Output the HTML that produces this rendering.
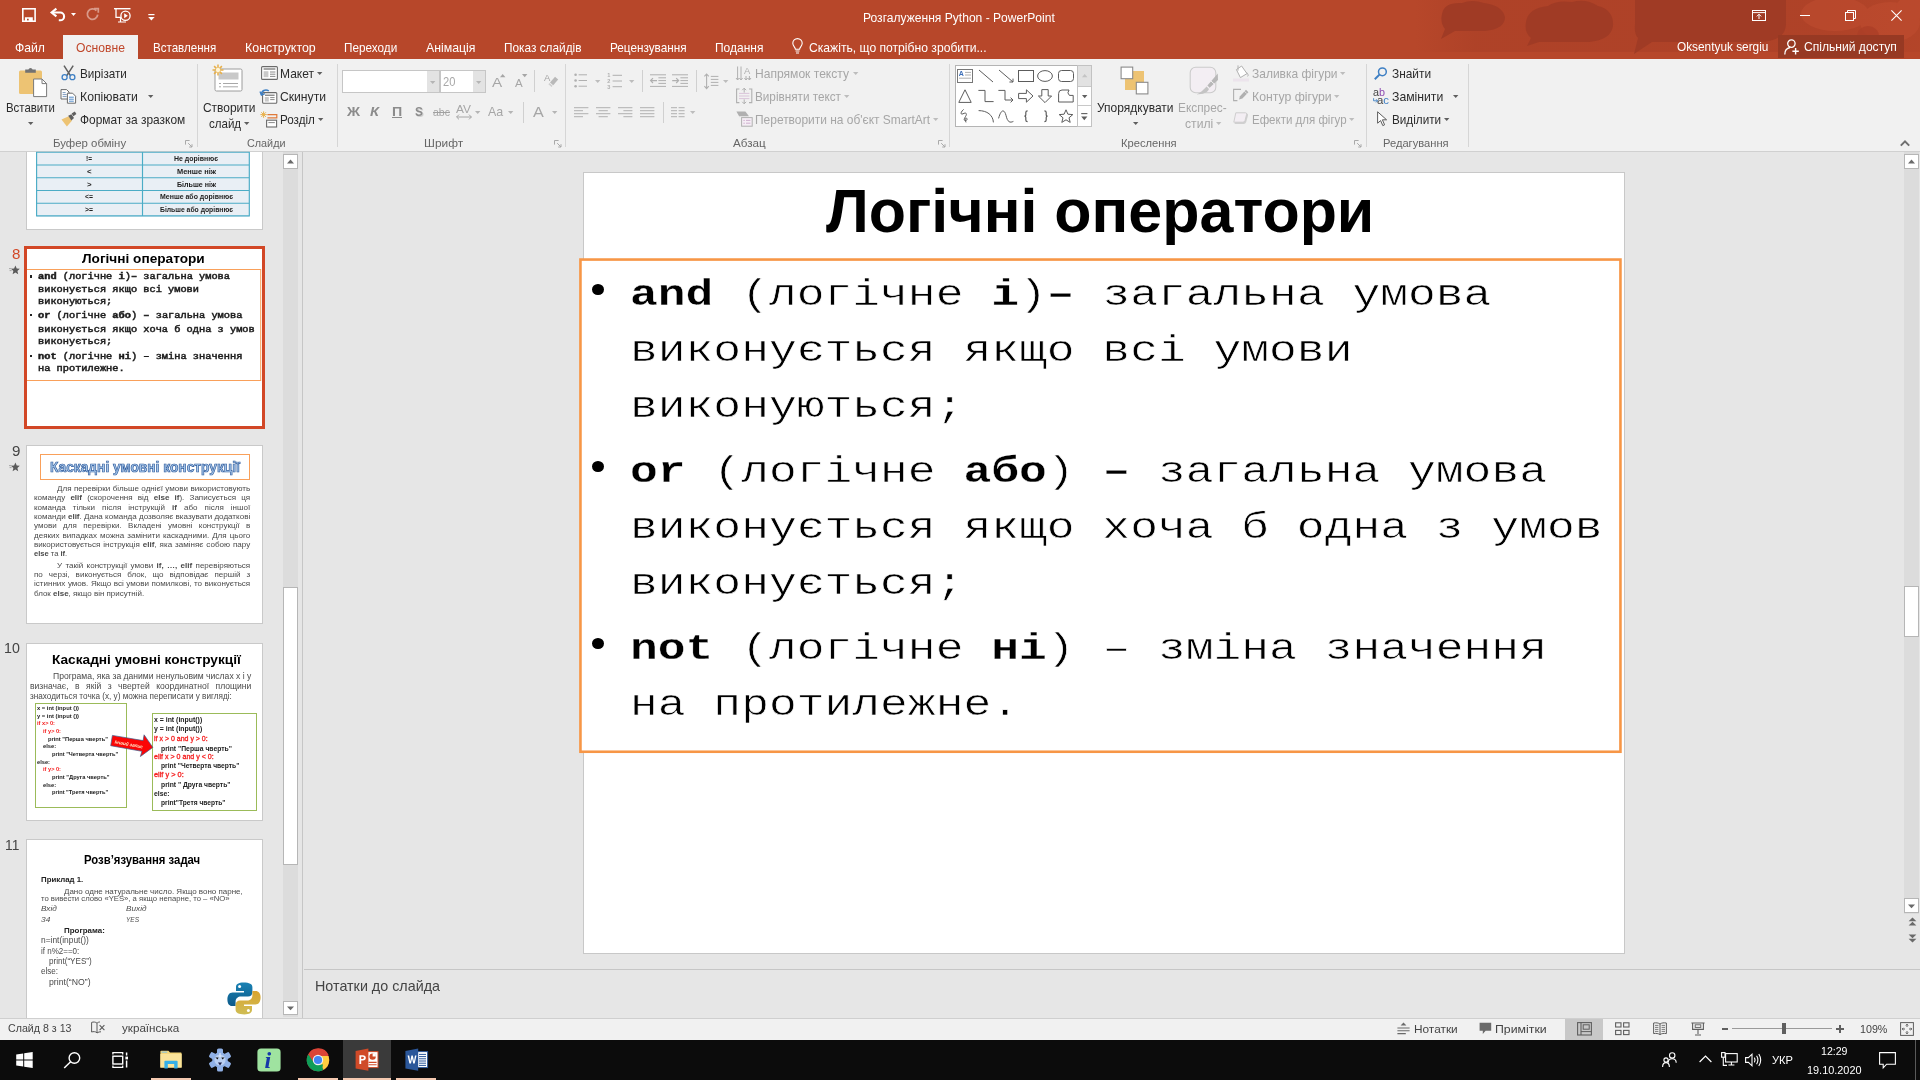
<!DOCTYPE html>
<html><head><meta charset="utf-8">
<style>
*{box-sizing:border-box;margin:0;padding:0}
html,body{width:1920px;height:1080px;overflow:hidden;background:#e6e6e6}
body{font-family:"Liberation Sans",sans-serif;font-size:12px;color:#262626;position:relative}
.a{position:absolute;white-space:pre}
svg{position:absolute;overflow:visible}
.stx b{-webkit-text-stroke:0.3px #fff}
.mono{font-family:"Liberation Mono",monospace}
#root{position:absolute;left:0;top:0;width:1920px;height:1080px;will-change:transform;}
</style></head><body><div id="root">

<div class="a" style="left:0;top:0;width:1920px;height:59px;background:#b7472a"></div>
<div class="a" style="left:0;top:59px;width:1920px;height:93px;background:#f1f1f1;border-bottom:1px solid #d0d0d0"></div>
<div class="a" style="left:0;top:152px;width:1920px;height:866px;background:#e6e6e6"></div>
<div class="a" style="left:0;top:1018px;width:1920px;height:22px;background:#f1f1f1;border-top:1px solid #cfcfcf"></div>
<div class="a" style="left:0;top:1040px;width:1920px;height:40px;background:#0c0c0c"></div>

<svg style="left:1400px;top:0" width="520" height="59" viewBox="1400 0 520 59">
<defs><clipPath id="tbc"><rect x="1400" y="0" width="520" height="59"/></clipPath>
<linearGradient id="tbh" x1="0" x2="1" y1="0" y2="0"><stop offset="0" stop-color="#a83e26" stop-opacity="0"/><stop offset=".12" stop-color="#a83e26" stop-opacity=".55"/><stop offset=".8" stop-color="#a83e26" stop-opacity=".55"/><stop offset="1" stop-color="#a83e26" stop-opacity=".25"/></linearGradient></defs>
<g clip-path="url(#tbc)">
<rect x="1415" y="0" width="505" height="52" fill="url(#tbh)"/>
<g fill="#a03b25">
<path d="M1442 14q2-12 20-11 10-4 22 0 18 2 21 14 0 12-20 14h-30l-14 8 4-10q-5-6-3-15z"/>
<path d="M1526 22q2-14 22-16 8-6 24-4 14-4 26 4 16 4 15 20-2 14-24 16h-50l-12 4 4-8q-7-6-5-16z"/>
<path d="M1635 0h151v24q0 18-30 18h-104l-18 12 4-16q-4-4-3-14z"/>
</g>
<g fill="#c24e31" opacity=".5"><ellipse cx="1835" cy="14" rx="34" ry="17"/><ellipse cx="1890" cy="22" rx="30" ry="20"/><ellipse cx="1912" cy="8" rx="16" ry="12"/></g><ellipse cx="1868" cy="36" rx="11" ry="10" fill="#ab3f27" opacity=".8"/>
</g></svg>
<svg style="left:22px;top:8px" width="14" height="14" viewBox="0 0 14 14"><rect x="0.800" y="0.800" width="12.300" height="12.400" fill="none" stroke="#fff" stroke-width="1.600"/><path d="M2.900 9.200H10.800V13H6.700V10.800H5V13H2.900z" fill="#fff"/></svg>
<svg style="left:50px;top:7px" width="17" height="16" viewBox="50 7 17 16"><path d="M52 12.500H60.200A3.900 3.900 0 0 1 60.200 20.300H58.800" fill="none" stroke="#fff" stroke-width="2.100"/><path d="M56.400 8.600L51.600 12.500 56.400 16.400" fill="none" stroke="#fff" stroke-width="2.100"/></svg>
<svg style="left:71.200px;top:12.800px" width="6" height="4"><path d="M0 0h5L2.500 3z" fill="#fff"/></svg>
<svg style="left:86px;top:7px" width="14" height="15" viewBox="86 7 14 15"><path d="M96.400 10.700A5.200 5.200 0 1 0 97.700 14.600" fill="none" stroke="#d99a8a" stroke-width="1.800"/><path d="M94 8.700H98.300V12.800" fill="none" stroke="#d99a8a" stroke-width="1.700"/></svg>
<svg style="left:114px;top:7px" width="18" height="17" viewBox="0 0 18 17"><path d="M0 1.7h16.5" stroke="#fff" stroke-width="1.4"/><path d="M2 2v8.3h5" fill="none" stroke="#fff" stroke-width="1.3"/><circle cx="11.5" cy="8.8" r="4.6" fill="none" stroke="#fff" stroke-width="1.3"/><path d="M10.2 6.3v5l3.6-2.5z" fill="#fff"/><path d="M6.5 10.5v4M4 15h8" stroke="#fff" stroke-width="1.2"/></svg>
<svg style="left:147.500px;top:14.400px" width="7" height="8"><path d="M0.3 0.6h6.2" stroke="#fff" stroke-width="1.2"/><path d="M0.2 3h6.4L3.4 6.6z" fill="#fff"/></svg>
<div class="a" style="left:862.80px;top:11.99px;font-size:12.3px;line-height:1;color:#ffffff;transform-origin:0 0;transform:scaleX(0.9819);">Розгалуження Python - PowerPoint</div>
<svg style="left:1752px;top:10px" width="14" height="11" viewBox="0 0 14 11"><rect x="0.5" y="0.5" width="13" height="10" fill="none" stroke="#fff"/><path d="M0.5 2.6h13" stroke="#fff"/><path d="M7 9V4.4M4.8 6.4L7 4.2l2.2 2.2" fill="none" stroke="#fff"/></svg>
<div class="a" style="left:1800px;top:15px;width:10px;height:1px;background:#fff"></div>
<svg style="left:1845px;top:10px" width="11" height="11" viewBox="0 0 11 11"><rect x="0.5" y="2.5" width="8" height="8" fill="none" stroke="#fff"/><path d="M2.5 2.5v-2h8v8h-2" fill="none" stroke="#fff"/></svg>
<svg style="left:1891px;top:10px" width="11" height="11" viewBox="0 0 11 11"><path d="M0.4 0.4l10.2 10.2M10.6 0.4L0.4 10.6" stroke="#fff" stroke-width="1.1"/></svg>
<div class="a" style="left:63px;top:35px;width:75px;height:25px;background:#f1f1f1"></div>
<div class="a" style="left:14.50px;top:41.67px;font-size:12.2px;line-height:1;color:#ffffff;transform-origin:0 0;transform:scaleX(1.0010);">Файл</div>
<div class="a" style="left:152.75px;top:41.67px;font-size:12.2px;line-height:1;color:#ffffff;transform-origin:0 0;transform:scaleX(0.9498);">Вставлення</div>
<div class="a" style="left:244.75px;top:41.67px;font-size:12.2px;line-height:1;color:#ffffff;transform-origin:0 0;transform:scaleX(1.0180);">Конструктор</div>
<div class="a" style="left:344.00px;top:41.67px;font-size:12.2px;line-height:1;color:#ffffff;transform-origin:0 0;transform:scaleX(0.9643);">Переходи</div>
<div class="a" style="left:425.50px;top:41.67px;font-size:12.2px;line-height:1;color:#ffffff;transform-origin:0 0;transform:scaleX(1.0099);">Анімація</div>
<div class="a" style="left:503.70px;top:41.67px;font-size:12.2px;line-height:1;color:#ffffff;transform-origin:0 0;transform:scaleX(0.9706);">Показ слайдів</div>
<div class="a" style="left:609.60px;top:41.67px;font-size:12.2px;line-height:1;color:#ffffff;transform-origin:0 0;transform:scaleX(0.9641);">Рецензування</div>
<div class="a" style="left:714.60px;top:41.67px;font-size:12.2px;line-height:1;color:#ffffff;transform-origin:0 0;transform:scaleX(0.9831);">Подання</div>
<div class="a" style="left:808.90px;top:41.67px;font-size:12.2px;line-height:1;color:#ffffff;transform-origin:0 0;transform:scaleX(0.9958);">Скажіть, що потрібно зробити...</div>
<div class="a" style="left:75.75px;top:41.67px;font-size:12.2px;line-height:1;color:#c0472b;transform-origin:0 0;transform:scaleX(0.9984);">Основне</div>
<svg style="left:792px;top:38px" width="11" height="16" viewBox="0 0 11 16"><path d="M3.4 11.2c0-2-2.6-3-2.6-5.9a4.7 4.7 0 0 1 9.4 0c0 2.9-2.6 3.9-2.6 5.9z" fill="none" stroke="#fff" stroke-width="1.1"/><path d="M3.5 13h4M4 15h3" stroke="#fff" stroke-width="1.1"/></svg>
<div class="a" style="left:1676.80px;top:40.67px;font-size:12.2px;line-height:1;color:#ffffff;transform-origin:0 0;transform:scaleX(0.9707);">Oksentyuk sergiu</div>
<div class="a" style="left:1778px;top:35px;width:126px;height:23px;background:#973923"></div>
<svg style="left:1784px;top:39px" width="16" height="16" viewBox="0 0 16 16"><circle cx="7.4" cy="4.6" r="3.7" fill="none" stroke="#fff" stroke-width="1.3"/><path d="M0.8 15.4c0-4 2.6-6.4 5.2-6.9" fill="none" stroke="#fff" stroke-width="1.3"/><path d="M11.6 9v6.4M8.4 12.2h6.4" stroke="#fff" stroke-width="1.4"/></svg>
<div class="a" style="left:1803.60px;top:40.67px;font-size:12.2px;line-height:1;color:#ffffff;transform-origin:0 0;transform:scaleX(0.9914);">Спільний доступ</div>
<svg style="left:18px;top:66px" width="31" height="32" viewBox="0 0 31 32">
<rect x="1" y="4.5" width="23" height="23.5" rx="1.5" fill="#edc373"/>
<path d="M7.2 6.8V3.6h3.2a2.2 2.2 0 0 1 4.2 0h3.2v3.2z" fill="#727272"/>
<path d="M15.6 13h8.4l4.6 4.6V30.6H15.6z" fill="#fff" stroke="#7a7a7a" stroke-width="1"/>
<path d="M24 13v4.6h4.6" fill="none" stroke="#7a7a7a" stroke-width="1"/></svg>
<div class="a" style="left:6.20px;top:101.90px;font-size:12.4px;line-height:1;color:#2b2b2b;transform-origin:0 0;transform:scaleX(0.9208);">Вставити</div>
<svg style="left:27.8px;top:121.5px" width="6" height="4"><path d="M0 0h5.4L2.7 3z" fill="#5f5f5f"/></svg>
<svg style="left:61px;top:65px" width="16" height="16" viewBox="0 0 16 16">
<path d="M3 0.6l6.6 10.2M12.2 0.6L5.6 10.8" stroke="#5f5f5f" stroke-width="1.5" fill="none"/>
<circle cx="3.6" cy="12.2" r="2.5" fill="none" stroke="#3d7fc4" stroke-width="1.3"/><circle cx="11.4" cy="12.2" r="2.5" fill="none" stroke="#3d7fc4" stroke-width="1.3"/></svg>
<div class="a" style="left:80.30px;top:68.20px;font-size:12.4px;line-height:1;color:#2b2b2b;transform-origin:0 0;transform:scaleX(0.9430);">Вирізати</div>
<svg style="left:60px;top:89px" width="17" height="15" viewBox="0 0 17 15">
<path d="M1 0.6h5.6l2.4 2.4v7H1z" fill="#fff" stroke="#6a6a6a" stroke-width="1"/>
<path d="M2.6 3.6h3M2.6 5.6h4M2.6 7.6h4" stroke="#6f8fb8" stroke-width=".9"/>
<path d="M7.4 4.2h5.2l3 3V14.2H7.4z" fill="#fff" stroke="#6a6a6a" stroke-width="1"/>
<path d="M9 8.2h4.8M9 10.2h4.8M9 12.2h4.8" stroke="#3d7fc4" stroke-width=".9"/></svg>
<div class="a" style="left:80.30px;top:91.20px;font-size:12.4px;line-height:1;color:#2b2b2b;transform-origin:0 0;transform:scaleX(0.9892);">Копіювати</div>
<svg style="left:148.0px;top:94.8px" width="6" height="4"><path d="M0 0h5.4L2.7 3z" fill="#5f5f5f"/></svg>
<svg style="left:61px;top:111px" width="17" height="16" viewBox="0 0 17 16">
<path d="M0.5 8.6l7.2-3.4 3.2 4.6-5 5.6z" fill="#edc373"/>
<path d="M7.2 4.8l3.2-1.6 2.6 3.8-2.6 2.4z" fill="#5f5f5f"/>
<path d="M10.6 2.6l3.2-2 1.6 2.4-3 2.2z" fill="#5f5f5f"/></svg>
<div class="a" style="left:80.30px;top:114.10px;font-size:12.4px;line-height:1;color:#2b2b2b;transform-origin:0 0;transform:scaleX(0.9611);">Формат за зразком</div>
<div class="a" style="left:53.20px;top:136.68px;font-size:11.6px;line-height:1;color:#666;transform-origin:0 0;transform:scaleX(0.9843);">Буфер обміну</div>
<svg style="left:185.0px;top:140px" width="8" height="8" viewBox="0 0 8 8"><path d="M0.5 4.6V0.5H4.6" fill="none" stroke="#a0a0a0" stroke-width=".9"/><path d="M3.2 3.2l3.600 3.600M7 4.200v2.800H4.200" fill="none" stroke="#a0a0a0" stroke-width=".9"/></svg>
<div class="a" style="left:196.5px;top:63.5px;width:1px;height:83.0px;background:#d6d6d6"></div>
<svg style="left:212px;top:64px" width="32" height="29" viewBox="0 0 32 29">
<rect x="3" y="5" width="27" height="22" rx="1.5" fill="#fff" stroke="#9c9c9c" stroke-width="1"/>
<rect x="6.5" y="8.5" width="20" height="7" fill="#c9c9c9"/>
<path d="M7 19.5h2M11 19.5h15M7 22.8h2M11 22.8h15" stroke="#a8a8a8" stroke-width="1"/>
<g stroke="#e8b04a" stroke-width="1.5"><path d="M6 0.5v11M0.5 6h11M2.1 2.1l7.8 7.8M9.9 2.1L2.1 9.9"/></g><circle cx="6" cy="6" r="2.2" fill="#fff5d8"/></svg>
<div class="a" style="left:202.80px;top:101.90px;font-size:12.4px;line-height:1;color:#2b2b2b;transform-origin:0 0;transform:scaleX(0.9637);">Створити</div>
<div class="a" style="left:209.20px;top:117.70px;font-size:12.4px;line-height:1;color:#2b2b2b;transform-origin:0 0;transform:scaleX(0.9313);">слайд</div>
<svg style="left:243.5px;top:121.8px" width="6" height="4"><path d="M0 0h5.4L2.7 3z" fill="#5f5f5f"/></svg>
<svg style="left:260.5px;top:66px" width="17" height="14" viewBox="0 0 17 14"><rect x="0.6" y="0.6" width="15.8" height="12.8" rx="1" fill="#fff" stroke="#6a6a6a" stroke-width="1.1"/><path d="M2.6 3h11.8" stroke="#6a6a6a" stroke-width="1.2"/><rect x="2.6" y="5.2" width="4.8" height="6" fill="#c9c9c9"/><path d="M9 6h5.4M9 8.2h5.4M9 10.4h5.4" stroke="#8a8a8a" stroke-width="1"/></svg>
<div class="a" style="left:279.80px;top:68.20px;font-size:12.4px;line-height:1;color:#2b2b2b;transform-origin:0 0;transform:scaleX(0.9693);">Макет</div>
<svg style="left:316.8px;top:71.8px" width="6" height="4"><path d="M0 0h5.4L2.7 3z" fill="#5f5f5f"/></svg>
<svg style="left:260px;top:88px" width="18" height="16" viewBox="0 0 18 16"><rect x="2.6" y="4.6" width="14.2" height="10.6" rx="1" fill="#fff" stroke="#6a6a6a" stroke-width="1.1"/><path d="M5 7.2h9.6" stroke="#6a6a6a" stroke-width="1.1"/><rect x="4.8" y="9" width="4" height="4.6" fill="#c9c9c9"/><path d="M10.2 9.6h4.4M10.2 11.6h4.4" stroke="#8a8a8a" stroke-width="1"/><path d="M1.4 6.8C1.4 2.6 5.4 0.8 8.8 2.8" fill="none" stroke="#3d7fc4" stroke-width="1.5"/><path d="M0 3.6l1.4 3.6 3.4-1.6" fill="none" stroke="#3d7fc4" stroke-width="1.3"/></svg>
<div class="a" style="left:279.80px;top:91.20px;font-size:12.4px;line-height:1;color:#2b2b2b;transform-origin:0 0;transform:scaleX(0.9800);">Скинути</div>
<svg style="left:260px;top:111px" width="18" height="17" viewBox="0 0 18 17"><g stroke="#e8b04a" stroke-width="1"><path d="M3.6 0.4v6.4M0.4 3.6h6.4M1.3 1.3l4.6 4.6M5.9 1.3L1.3 5.9"/></g><path d="M7.4 3.6h9.4v3.2H7.4" fill="none" stroke="#e07a3a" stroke-width="1.2"/><rect x="6.6" y="9.2" width="10" height="6.8" fill="#fff" stroke="#6a6a6a" stroke-width="1.1"/><path d="M8.4 11.6h6.4" stroke="#8a8a8a" stroke-width="1"/></svg>
<div class="a" style="left:279.80px;top:114.10px;font-size:12.4px;line-height:1;color:#2b2b2b;transform-origin:0 0;transform:scaleX(0.9409);">Розділ</div>
<svg style="left:318.0px;top:117.8px" width="6" height="4"><path d="M0 0h5.4L2.7 3z" fill="#5f5f5f"/></svg>
<div class="a" style="left:247.30px;top:136.68px;font-size:11.6px;line-height:1;color:#666;transform-origin:0 0;transform:scaleX(0.9319);">Слайди</div>
<div class="a" style="left:337.0px;top:63.5px;width:1px;height:83.0px;background:#d6d6d6"></div>
<div class="a" style="left:342px;top:70px;width:97.5px;height:23px;background:#fff;border:1px solid #c6c6c6"></div>
<div class="a" style="left:426.5px;top:71px;width:12px;height:21px;background:#e3e3e3"></div>
<svg style="left:430.0px;top:80.6px" width="6" height="4"><path d="M0 0h5.4L2.7 3z" fill="#b5b5b5"/></svg>
<div class="a" style="left:440px;top:70px;width:46px;height:23px;background:#fff;border:1px solid #c6c6c6"></div>
<div class="a" style="left:472.5px;top:71px;width:12.5px;height:21px;background:#e3e3e3"></div>
<svg style="left:476.0px;top:80.6px" width="6" height="4"><path d="M0 0h5.4L2.7 3z" fill="#b5b5b5"/></svg>
<div class="a" style="left:442.80px;top:75.90px;font-size:12.4px;line-height:1;color:#a8a8a8;transform-origin:0 0;transform:scaleX(0.8988);">20</div>
<div class="a" style="left:492.00px;top:76.23px;font-size:13.2px;line-height:1;color:#a6a6a6;transform-origin:0 0;transform:scaleX(1.1595);">A</div>
<svg style="left:500px;top:73.6px" width="6" height="4"><path d="M0 3.2h5.4L2.7 0z" fill="#a6a6a6"/></svg>
<div class="a" style="left:515.30px;top:78.43px;font-size:10.6px;line-height:1;color:#a6a6a6;transform-origin:0 0;transform:scaleX(1.0879);">A</div>
<svg style="left:521.5px;top:73.6px" width="6" height="4"><path d="M0 0h5.4L2.7 3.2z" fill="#a6a6a6"/></svg>
<div class="a" style="left:534.2px;top:70px;width:1px;height:22px;background:#d0d0d0"></div>
<svg style="left:544px;top:73px" width="15" height="16" viewBox="0 0 15 16"><text x="0" y="8" font-family="Liberation Sans" font-size="9.5" fill="#a6a6a6">A</text><path d="M6 9.4l5-5.6 3.2 2.8-5 5.6z" fill="#b9b9b9"/><path d="M4.4 11.2l1-1.2 3.2 2.8-1 1.2z" fill="#cfcfcf"/></svg>
<div class="a" style="left:346.70px;top:105.90px;font-size:12.4px;line-height:1;color:#8c8c8c;transform-origin:0 0;transform:scaleX(1.1604);font-weight:bold;">Ж</div>
<div class="a" style="left:369.80px;top:105.90px;font-size:12.4px;line-height:1;color:#8c8c8c;transform-origin:0 0;transform:scaleX(1.1803);font-weight:bold;font-style:italic;">К</div>
<div class="a" style="left:392.00px;top:105.84px;font-size:12px;line-height:1;color:#8c8c8c;transform-origin:0 0;transform:scaleX(1.1826);font-weight:bold;">П</div>
<div class="a" style="left:392px;top:117px;width:10px;height:1px;background:#8c8c8c"></div>
<div class="a" style="left:415.70px;top:106.70px;font-size:12.4px;line-height:1;color:#cfcfcf;transform-origin:0 0;transform:scaleX(0.9679);font-weight:bold;">S</div>
<div class="a" style="left:414.80px;top:105.90px;font-size:12.4px;line-height:1;color:#8c8c8c;transform-origin:0 0;transform:scaleX(0.9558);font-weight:bold;">S</div>
<div class="a" style="left:432.80px;top:107.43px;font-size:10.6px;line-height:1;color:#a6a6a6;transform-origin:0 0;transform:scaleX(0.9887);">abc</div>
<div class="a" style="left:432.5px;top:112px;width:17.5px;height:1px;background:#a0a0a0"></div>
<div class="a" style="left:455.80px;top:104.60px;font-size:10.4px;line-height:1;color:#a6a6a6;transform-origin:0 0;transform:scaleX(1.1456);">AV</div>
<svg style="left:455.5px;top:113.5px" width="16" height="6" viewBox="0 0 16 6"><path d="M0.6 3h14.8M3 0.6L0.6 3 3 5.4M13 0.6L15.4 3 13 5.4" fill="none" stroke="#a6a6a6" stroke-width="1"/></svg>
<svg style="left:475.0px;top:111.1px" width="6" height="4"><path d="M0 0h5.4L2.7 3z" fill="#b5b5b5"/></svg>
<div class="a" style="left:487.80px;top:105.90px;font-size:12.4px;line-height:1;color:#a6a6a6;transform-origin:0 0;transform:scaleX(1.0029);">Aa</div>
<svg style="left:508.0px;top:111.1px" width="6" height="4"><path d="M0 0h5.4L2.7 3z" fill="#b5b5b5"/></svg>
<div class="a" style="left:522.5px;top:101.5px;width:1px;height:21.0px;background:#d0d0d0"></div>
<div class="a" style="left:532.50px;top:105.04px;font-size:14.6px;line-height:1;color:#a6a6a6;transform-origin:0 0;transform:scaleX(1.1095);">A</div>
<svg style="left:552.0px;top:111.1px" width="6" height="4"><path d="M0 0h5.4L2.7 3z" fill="#b5b5b5"/></svg>
<div class="a" style="left:424.20px;top:136.68px;font-size:11.6px;line-height:1;color:#666;transform-origin:0 0;transform:scaleX(1.0247);">Шрифт</div>
<svg style="left:554.0px;top:140px" width="8" height="8" viewBox="0 0 8 8"><path d="M0.5 4.6V0.5H4.6" fill="none" stroke="#a0a0a0" stroke-width=".9"/><path d="M3.2 3.2l3.600 3.600M7 4.200v2.800H4.200" fill="none" stroke="#a0a0a0" stroke-width=".9"/></svg>
<div class="a" style="left:565.3px;top:63.5px;width:1px;height:83.0px;background:#d6d6d6"></div>
<svg style="left:574px;top:73px" width="14" height="15" viewBox="0 0 14 15"><g fill="#b0b0b0"><circle cx="1.6" cy="1.8" r="1.3"/><circle cx="1.6" cy="7.5" r="1.3"/><circle cx="1.6" cy="13.2" r="1.3"/></g><path d="M4.6 1.8H13M4.6 7.5H13M4.6 13.2H13" stroke="#b0b0b0" stroke-width="1"/></svg>
<svg style="left:594.7px;top:79.8px" width="6" height="4"><path d="M0 0h5.4L2.7 3z" fill="#bdbdbd"/></svg>
<svg style="left:607px;top:72.5px" width="16" height="16" viewBox="0 0 16 16"><g font-family="Liberation Sans" font-size="5.6" font-weight="bold" fill="#b0b0b0"><text x="0.2" y="4.4">1</text><text x="0.2" y="10">2</text><text x="0.2" y="15.6">3</text></g><path d="M5.6 2.3H15M5.6 8H15M5.6 13.7H15" stroke="#b0b0b0" stroke-width="1"/></svg>
<svg style="left:629.0px;top:79.8px" width="6" height="4"><path d="M0 0h5.4L2.7 3z" fill="#bdbdbd"/></svg>
<div class="a" style="left:642.3px;top:70px;width:1px;height:22px;background:#d0d0d0"></div>
<svg style="left:650px;top:73.5px" width="16" height="14" viewBox="0 0 16 14"><path d="M0 0.8H16M8.4 3.8H16M8.4 6.6H16M8.4 9.4H16M0 12.4H16" stroke="#b0b0b0" stroke-width="1"/><path d="M0.6 6.6H7M3 4.2L0.6 6.6 3 9" fill="none" stroke="#b0b0b0" stroke-width="1.2"/></svg>
<svg style="left:672px;top:73.5px" width="16" height="14" viewBox="0 0 16 14"><path d="M0 0.8H16M8.4 3.8H16M8.4 6.6H16M8.4 9.4H16M0 12.4H16" stroke="#b0b0b0" stroke-width="1"/><path d="M0.2 6.6H6.6M4.2 4.2L6.6 6.6 4.2 9" fill="none" stroke="#b0b0b0" stroke-width="1.2"/></svg>
<div class="a" style="left:695.5px;top:70px;width:1px;height:22px;background:#d0d0d0"></div>
<svg style="left:703.5px;top:73px" width="15" height="17" viewBox="0 0 15 17"><path d="M2.6 1V15.6M0.4 3.4L2.6 1l2.2 2.4M0.4 13.2l2.2 2.4 2.2-2.4" fill="none" stroke="#b0b0b0" stroke-width="1.1"/><path d="M6.8 3.4H14.4M6.8 6.4H14.4M6.8 9.4H14.4M6.8 12.4H14.4" stroke="#b0b0b0" stroke-width="1"/></svg>
<svg style="left:723.0px;top:79.8px" width="6" height="4"><path d="M0 0h5.4L2.7 3z" fill="#bdbdbd"/></svg>
<svg style="left:735.5px;top:64.5px" width="16" height="17" viewBox="0 0 16 17"><path d="M1.6 1.5V15M5 1.5V15M0 13l1.6 2 1.6-2M3.4 13l1.6 2 1.6-2M10 11v4M13.4 11v4M8.4 13l1.6 2 1.6-2M11.8 13l1.6 2 1.6-2" fill="none" stroke="#b0b0b0" stroke-width="1"/><text x="8" y="8.6" font-family="Liberation Sans" font-size="9.4" fill="#b0b0b0">A</text></svg>
<div class="a" style="left:755.30px;top:68.20px;font-size:12.4px;line-height:1;color:#a6a6a6;transform-origin:0 0;transform:scaleX(0.9743);">Напрямок тексту</div>
<svg style="left:852.5px;top:71.8px" width="6" height="4"><path d="M0 0h5.4L2.7 3z" fill="#bdbdbd"/></svg>
<svg style="left:735.5px;top:88px" width="17" height="16" viewBox="0 0 17 16"><path d="M3.4 1H0.6v13.6h2.8M13 1h2.8v13.6H13" fill="none" stroke="#b0b0b0" stroke-width="1.1"/><path d="M3 5.4h10.4M3 8h10.4M3 10.6h10.4" stroke="#d7bfd7" stroke-width=".9"/><path d="M8.2 0.2v4.4M6.2 2.2l2-2 2 2M8.2 15.8v-4.4M6.2 13.8l2 2 2-2" fill="none" stroke="#b0b0b0" stroke-width="1"/></svg>
<div class="a" style="left:755.30px;top:91.20px;font-size:12.4px;line-height:1;color:#a6a6a6;transform-origin:0 0;transform:scaleX(0.9464);">Вирівняти текст</div>
<svg style="left:844.0px;top:94.8px" width="6" height="4"><path d="M0 0h5.4L2.7 3z" fill="#bdbdbd"/></svg>
<svg style="left:735.5px;top:111px" width="17" height="16" viewBox="0 0 17 16"><path d="M0.4 0.4h9l3.6 4.8H3l1.8 3z" fill="#b0b0b0"/><rect x="5.6" y="6.6" width="10.6" height="8.6" fill="#f6eef6" stroke="#b0b0b0" stroke-width="1"/><path d="M7.4 9.4h1.4M10 9.4h4.4M7.4 12.2h1.4M10 12.2h4.4" stroke="#c9a9c9" stroke-width=".9"/></svg>
<div class="a" style="left:755.30px;top:114.10px;font-size:12.4px;line-height:1;color:#a6a6a6;transform-origin:0 0;transform:scaleX(0.9645);">Перетворити на об&#x27;єкт SmartArt</div>
<svg style="left:933.0px;top:117.8px" width="6" height="4"><path d="M0 0h5.4L2.7 3z" fill="#bdbdbd"/></svg>
<svg style="left:573.7px;top:107px" width="15" height="11"><path d="M0.0 0.7H14.4M0.0 3.7H9.0M0.0 6.7H14.4M0.0 9.7H9.0" stroke="#b0b0b0" stroke-width="1"/></svg>
<svg style="left:595.8px;top:107px" width="15" height="11"><path d="M0.0 0.7H14.4M2.6 3.7H11.8M0.0 6.7H14.4M2.6 9.7H11.8" stroke="#b0b0b0" stroke-width="1"/></svg>
<svg style="left:617.5px;top:107px" width="15" height="11"><path d="M0.0 0.7H14.4M5.4 3.7H14.4M0.0 6.7H14.4M5.4 9.7H14.4" stroke="#b0b0b0" stroke-width="1"/></svg>
<svg style="left:640px;top:107px" width="15" height="11"><path d="M0.0 0.7H14.4M0.0 3.7H14.4M0.0 6.7H14.4M0.0 9.7H14.4" stroke="#b0b0b0" stroke-width="1"/></svg>
<div class="a" style="left:662.5px;top:101.5px;width:1px;height:21.0px;background:#d0d0d0"></div>
<svg style="left:670.8px;top:107px" width="14" height="11"><path d="M0 0.7H6M0 3.7H6M0 6.7H6M0 9.7H6M7.6 0.7H13.6M7.6 3.7H13.6M7.6 6.7H13.6M7.6 9.7H13.6" stroke="#b0b0b0" stroke-width="1"/></svg>
<svg style="left:690.0px;top:111.2px" width="6" height="4"><path d="M0 0h5.4L2.7 3z" fill="#bdbdbd"/></svg>
<div class="a" style="left:732.80px;top:136.68px;font-size:11.6px;line-height:1;color:#666;transform-origin:0 0;transform:scaleX(1.0052);">Абзац</div>
<svg style="left:938.0px;top:140px" width="8" height="8" viewBox="0 0 8 8"><path d="M0.5 4.6V0.5H4.6" fill="none" stroke="#a0a0a0" stroke-width=".9"/><path d="M3.2 3.2l3.600 3.600M7 4.200v2.800H4.200" fill="none" stroke="#a0a0a0" stroke-width=".9"/></svg>
<div class="a" style="left:949.0px;top:63.5px;width:1px;height:83.0px;background:#d6d6d6"></div>
<div class="a" style="left:955px;top:65px;width:137px;height:62px;background:#fff;border:1px solid #b4b4b4"></div>
<div class="a" style="left:1077px;top:65px;width:15px;height:62px;border:1px solid #c2c2c2;background:#fff"></div>
<div class="a" style="left:1078px;top:66px;width:13px;height:20.5px;background:#e2e2e2"></div>
<div class="a" style="left:1078px;top:86px;width:13px;height:1px;background:#c8c8c8"></div>
<div class="a" style="left:1078px;top:105px;width:13px;height:1px;background:#c8c8c8"></div>
<svg style="left:1082px;top:74px" width="6" height="4"><path d="M0 3.2h5.4L2.7 0z" fill="#c4c4c4"/></svg>
<svg style="left:1082px;top:95.400px" width="6" height="4"><path d="M0 0h5.4L2.7 3.2z" fill="#5f5f5f"/></svg>
<svg style="left:1081.400px;top:112.800px" width="7" height="9"><path d="M0.2 0.6h6.2" stroke="#5f5f5f" stroke-width="1.1"/><path d="M0.2 3.4h6.2L3.3 7.2z" fill="#5f5f5f"/></svg>
<svg style="left:957.3px;top:68.8px" width="16" height="14" viewBox="0 0 16 14" fill="none" stroke="#5c5c5c" stroke-width="1"><rect x="0.5" y="0.5" width="15" height="13" fill="#fff" stroke="#777"/><text x="1.8" y="7" font-family="Liberation Sans" font-size="7" font-weight="bold" fill="#3d6fb8" stroke="none">A</text><path d="M8 3.4h6M8 6h6M2 9.2h12" stroke="#9a9a9a" stroke-width=".8"/></svg>
<svg style="left:977.8px;top:68.8px" width="16" height="14" viewBox="0 0 16 14" fill="none" stroke="#5c5c5c" stroke-width="1"><path d="M1 1L15 13"/></svg>
<svg style="left:997.8px;top:68.8px" width="16" height="14" viewBox="0 0 16 14" fill="none" stroke="#5c5c5c" stroke-width="1"><path d="M1 1L15 13M15 9.6V13H11.4"/></svg>
<svg style="left:1017.8px;top:68.8px" width="16" height="14" viewBox="0 0 16 14" fill="none" stroke="#5c5c5c" stroke-width="1"><rect x="0.5" y="1.5" width="15" height="11"/></svg>
<svg style="left:1037.3px;top:68.8px" width="16" height="14" viewBox="0 0 16 14" fill="none" stroke="#5c5c5c" stroke-width="1"><ellipse cx="8" cy="7" rx="7.4" ry="5.4"/></svg>
<svg style="left:1057.8px;top:68.8px" width="16" height="14" viewBox="0 0 16 14" fill="none" stroke="#5c5c5c" stroke-width="1"><rect x="0.5" y="1.5" width="15" height="11" rx="3"/></svg>
<svg style="left:958.3px;top:88.8px" width="14" height="14" viewBox="0 0 14 14" fill="none" stroke="#5c5c5c" stroke-width="1"><path d="M7 0.8L13.2 13.4H0.8z"/></svg>
<svg style="left:977.8px;top:88.8px" width="16" height="14" viewBox="0 0 16 14" fill="none" stroke="#5c5c5c" stroke-width="1"><path d="M0.4 1.4H7V12.6H15.6"/></svg>
<svg style="left:997.8px;top:88.8px" width="16" height="14" viewBox="0 0 16 14" fill="none" stroke="#5c5c5c" stroke-width="1"><path d="M0.4 1.4H7V11H15M12.6 8.6L15 11l-2.4 2.4"/></svg>
<svg style="left:1017.8px;top:88.8px" width="16" height="14" viewBox="0 0 16 14" fill="none" stroke="#5c5c5c" stroke-width="1"><path d="M0.6 4.4H8.4V0.8L15 7 8.4 13.2V9.6H0.6z"/></svg>
<svg style="left:1037.3px;top:88.8px" width="16" height="14" viewBox="0 0 16 14" fill="none" stroke="#5c5c5c" stroke-width="1"><path d="M4.8 0.6h6.4V7h3.4L8 13.6 1.4 7h3.4z"/></svg>
<svg style="left:1057.8px;top:88.8px" width="16" height="14" viewBox="0 0 16 14" fill="none" stroke="#5c5c5c" stroke-width="1"><path d="M0.6 13V4.6Q0.6 1 4 1H11Q8.6 4 11.4 6.4H15.2V13z"/></svg>
<svg style="left:959.3px;top:108.8px" width="12" height="14" viewBox="0 0 12 14" fill="none" stroke="#5c5c5c" stroke-width="1"><path d="M4.600 0.400C1 3.600 1.600 6 4 4.800 7 3.200 8.400 4.400 6.600 7.400 5 9.800 4.600 11.600 6.400 11.600 8.600 11.600 8.600 9 6.800 9 5.600 9.200 6.400 11.400 7 13.400"/></svg>
<svg style="left:977.8px;top:108.8px" width="16" height="14" viewBox="0 0 16 14" fill="none" stroke="#5c5c5c" stroke-width="1"><path d="M0.6 1.6C9 1.6 15 6 15.4 13.4"/></svg>
<svg style="left:997.8px;top:108.8px" width="16" height="14" viewBox="0 0 16 14" fill="none" stroke="#5c5c5c" stroke-width="1"><path d="M0.6 9.4C3 0 6.4 0 8 6.4 9.6 13.4 12 14 15.4 12.4"/></svg>
<svg style="left:1021.8px;top:108.8px" width="8" height="14" viewBox="0 0 8 14" fill="none" stroke="#5c5c5c" stroke-width="1"><path d="M5.600 1.800Q3.800 1.800 3.800 3.400V5.800Q3.800 7.200 2.400 7.200Q3.800 7.200 3.800 8.600V11Q3.800 12.600 5.600 12.600" stroke-width="1.200"/></svg>
<svg style="left:1041.3px;top:108.8px" width="8" height="14" viewBox="0 0 8 14" fill="none" stroke="#5c5c5c" stroke-width="1"><path d="M3.400 1.800Q5.200 1.800 5.200 3.400V5.800Q5.200 7.200 6.600 7.200Q5.200 7.200 5.200 8.600V11Q5.200 12.600 3.400 12.600" stroke-width="1.200"/></svg>
<svg style="left:1057.8px;top:108.8px" width="16" height="14" viewBox="0 0 16 14" fill="none" stroke="#5c5c5c" stroke-width="1"><path d="M8 0.8L9.9 5.2 14.8 5.6 11 8.8 12.2 13.4 8 10.8 3.8 13.4 5 8.8 1.2 5.6 6.1 5.2z"/></svg>
<svg style="left:1120px;top:66px" width="29" height="29" viewBox="0 0 29 29"><rect x="5" y="5" width="19" height="19" fill="#edc373"/><rect x="1.1" y="1.1" width="11.6" height="11.6" fill="#fff" stroke="#8a8a8a" stroke-width="1.1"/><rect x="16.3" y="16.3" width="11.6" height="11.6" fill="#fff" stroke="#8a8a8a" stroke-width="1.1"/></svg>
<div class="a" style="left:1096.50px;top:102.20px;font-size:12.4px;line-height:1;color:#2b2b2b;transform-origin:0 0;transform:scaleX(0.9680);">Упорядкувати</div>
<svg style="left:1133.0px;top:122.0px" width="6" height="4"><path d="M0 0h5.4L2.7 3z" fill="#5f5f5f"/></svg>
<svg style="left:1189px;top:66px" width="30" height="31" viewBox="0 0 30 31"><rect x="1.2" y="1.2" width="25.6" height="25.6" rx="5.5" fill="#f3eef3" stroke="#cbcbcb" stroke-width="1.1"/><path d="M28.8 7.4L18.4 19.6l2.2 2.2L29 14z" fill="#b8b8b8"/><path d="M17.6 20.6l2.4 2.4c-1.4 3.8-6.2 5.4-12.4 5.4 4-1.2 6.4-4.6 10-7.8z" fill="#c4c4c4"/><path d="M22 15l3 2.8" stroke="#f1f1f1" stroke-width="1"/></svg>
<div class="a" style="left:1178.20px;top:102.20px;font-size:12.4px;line-height:1;color:#a6a6a6;transform-origin:0 0;transform:scaleX(0.9559);">Експрес-</div>
<div class="a" style="left:1185.30px;top:118.00px;font-size:12.4px;line-height:1;color:#a6a6a6;transform-origin:0 0;transform:scaleX(0.9798);">стилі</div>
<svg style="left:1216.0px;top:122.0px" width="6" height="4"><path d="M0 0h5.4L2.7 3z" fill="#bdbdbd"/></svg>
<svg style="left:1233px;top:64.5px" width="16" height="17" viewBox="0 0 16 17"><path d="M3.4 4.6L8.6 1 14 8.6 7.4 12.6z" fill="#fff" stroke="#b0b0b0" stroke-width="1"/><path d="M5 0.4V5.6" stroke="#b0b0b0" stroke-width="1"/><path d="M13.6 7.4c1.6 1.8 2 3.2 1 4" stroke="#b0b0b0" fill="none"/><rect x="0" y="13.6" width="16" height="3" fill="#ece4ec"/></svg>
<div class="a" style="left:1251.70px;top:68.20px;font-size:12.4px;line-height:1;color:#a6a6a6;transform-origin:0 0;transform:scaleX(0.9663);">Заливка фігури</div>
<svg style="left:1340.0px;top:71.8px" width="6" height="4"><path d="M0 0h5.4L2.7 3z" fill="#bdbdbd"/></svg>
<svg style="left:1233px;top:88px" width="16" height="15" viewBox="0 0 16 15"><path d="M8 1.4H0.6V12.6H4.4" fill="none" stroke="#b0b0b0" stroke-width="1.1"/><path d="M6 11.6l1-3.4 6-6.4 2.4 2.4-6 6.4z" fill="#b0b0b0"/><path d="M11.4 3.2l2.4 2.4" stroke="#f1f1f1" stroke-width=".8"/></svg>
<div class="a" style="left:1251.70px;top:91.20px;font-size:12.4px;line-height:1;color:#a6a6a6;transform-origin:0 0;transform:scaleX(0.9888);">Контур фігури</div>
<svg style="left:1334.0px;top:94.8px" width="6" height="4"><path d="M0 0h5.4L2.7 3z" fill="#bdbdbd"/></svg>
<svg style="left:1233px;top:112px" width="16" height="14" viewBox="0 0 16 14"><path d="M3.4 1.6h10.2q2 0 1.4 2L13.2 10q-.6 2-2.6 2H1.6z" fill="#d0d0d0"/><path d="M2.8 0.8h9.6q1.6 0 1.2 1.6L12 8.6q-.5 1.6-2.1 1.6H0.8z" fill="#f3eef3" stroke="#cbcbcb" stroke-width=".9"/></svg>
<div class="a" style="left:1251.70px;top:114.10px;font-size:12.4px;line-height:1;color:#a6a6a6;transform-origin:0 0;transform:scaleX(0.9276);">Ефекти для фігур</div>
<svg style="left:1349.0px;top:117.8px" width="6" height="4"><path d="M0 0h5.4L2.7 3z" fill="#bdbdbd"/></svg>
<div class="a" style="left:1121.20px;top:136.68px;font-size:11.6px;line-height:1;color:#666;transform-origin:0 0;transform:scaleX(0.9628);">Креслення</div>
<svg style="left:1354.0px;top:140px" width="8" height="8" viewBox="0 0 8 8"><path d="M0.5 4.6V0.5H4.6" fill="none" stroke="#a0a0a0" stroke-width=".9"/><path d="M3.2 3.2l3.600 3.600M7 4.200v2.800H4.200" fill="none" stroke="#a0a0a0" stroke-width=".9"/></svg>
<div class="a" style="left:1365.8px;top:63.5px;width:1px;height:83.0px;background:#d6d6d6"></div>
<svg style="left:1374px;top:67px" width="14" height="13" viewBox="0 0 14 13"><circle cx="8.4" cy="4.8" r="3.9" fill="none" stroke="#3d7fc4" stroke-width="1.5"/><path d="M5.4 7.6L0.8 12.2" stroke="#3d7fc4" stroke-width="2"/></svg>
<div class="a" style="left:1391.70px;top:68.20px;font-size:12.4px;line-height:1;color:#2b2b2b;transform-origin:0 0;transform:scaleX(0.9595);">Знайти</div>
<div class="a" style="left:1372.50px;top:88.40px;font-size:10.4px;line-height:1;color:#444;transform-origin:0 0;transform:scaleX(1.0378);">a<span style="color:#8c4bb0">b</span></div>
<div class="a" style="left:1377.10px;top:95.60px;font-size:10.4px;line-height:1;color:#444;transform-origin:0 0;transform:scaleX(1.0925);">a<span style="color:#3d7fc4">c</span></div>
<svg style="left:1373px;top:98px" width="5" height="5" viewBox="0 0 5 5"><path d="M0.6 0.2V2.8H4.6M3 1.2L4.6 2.8 3 4.4" fill="none" stroke="#3d7fc4" stroke-width=".9"/></svg>
<div class="a" style="left:1391.70px;top:91.20px;font-size:12.4px;line-height:1;color:#2b2b2b;transform-origin:0 0;transform:scaleX(0.9862);">Замінити</div>
<svg style="left:1452.8px;top:94.8px" width="6" height="4"><path d="M0 0h5.4L2.7 3z" fill="#5f5f5f"/></svg>
<svg style="left:1376.5px;top:110.5px" width="11" height="16" viewBox="0 0 11 16"><path d="M0.6 0.8V12.2L3.6 9.6 5.8 14.6 7.6 13.8 5.4 8.8H9.6z" fill="#fff" stroke="#5c5c5c" stroke-width="1"/></svg>
<div class="a" style="left:1391.70px;top:114.10px;font-size:12.4px;line-height:1;color:#2b2b2b;transform-origin:0 0;transform:scaleX(0.9457);">Виділити</div>
<svg style="left:1444.0px;top:117.8px" width="6" height="4"><path d="M0 0h5.4L2.7 3z" fill="#5f5f5f"/></svg>
<div class="a" style="left:1383.20px;top:136.68px;font-size:11.6px;line-height:1;color:#666;transform-origin:0 0;transform:scaleX(0.9616);">Редагування</div>
<div class="a" style="left:1467.5px;top:63.5px;width:1px;height:83.0px;background:#d6d6d6"></div>
<svg style="left:1900px;top:139px" width="10" height="7" viewBox="0 0 10 7"><path d="M0.8 6.6L5 2.4 9.2 6.6" fill="none" stroke="#6e6e6e" stroke-width="2"/></svg>
<div class="a" style="left:26px;top:152px;width:237px;height:77.5px;background:#fff;border:1px solid #c9c9c9;border-top:none;"></div>
<div class="a" style="left:36.2px;top:152px;width:213.5px;height:64.9px;background:#e9eff5;"></div>
<svg style="left:0;top:0" width="280" height="230"><path d="M36.2 152.2H249.7M36.2 165H249.7M36.2 177.7H249.7M36.2 190.5H249.7M36.2 203.2H249.7M36.2 215.9H249.7M36.6 152V215.9M142.5 152V215.9M249.29999999999998 152V215.9" stroke="#4bacc6" stroke-width="1.150" fill="none"/></svg>
<div class="a" style="left:86.00px;top:156.11px;font-size:6.6px;line-height:1;color:#222;transform-origin:0 0;transform:scaleX(0.9922);font-weight:bold;">!=</div>
<div class="a" style="left:174.00px;top:156.11px;font-size:6.6px;line-height:1;color:#222;transform-origin:0 0;transform:scaleX(1.0563);font-weight:bold;">Не дорівнює</div>
<div class="a" style="left:86.70px;top:168.86px;font-size:6.6px;line-height:1;color:#222;transform-origin:0 0;transform:scaleX(1.1919);font-weight:bold;">&lt;</div>
<div class="a" style="left:176.50px;top:168.86px;font-size:6.6px;line-height:1;color:#222;transform-origin:0 0;transform:scaleX(1.1258);font-weight:bold;">Менше ніж</div>
<div class="a" style="left:86.70px;top:181.61px;font-size:6.6px;line-height:1;color:#222;transform-origin:0 0;transform:scaleX(1.1919);font-weight:bold;">&gt;</div>
<div class="a" style="left:176.50px;top:181.61px;font-size:6.6px;line-height:1;color:#222;transform-origin:0 0;transform:scaleX(1.0740);font-weight:bold;">Більше ніж</div>
<div class="a" style="left:85.00px;top:194.36px;font-size:6.6px;line-height:1;color:#222;transform-origin:0 0;transform:scaleX(1.0385);font-weight:bold;">&lt;=</div>
<div class="a" style="left:159.50px;top:194.36px;font-size:6.6px;line-height:1;color:#222;transform-origin:0 0;transform:scaleX(1.0561);font-weight:bold;">Менше або дорівнює</div>
<div class="a" style="left:85.00px;top:207.06px;font-size:6.6px;line-height:1;color:#222;transform-origin:0 0;transform:scaleX(1.0385);font-weight:bold;">&gt;=</div>
<div class="a" style="left:159.50px;top:207.06px;font-size:6.6px;line-height:1;color:#222;transform-origin:0 0;transform:scaleX(1.0311);font-weight:bold;">Більше або дорівнює</div>
<div class="a" style="left:11.50px;top:247.28px;font-size:14.2px;line-height:1;color:#d24726;transform-origin:0 0;transform:scaleX(1.0646);">8</div>
<svg style="left:9px;top:264.5px" width="11" height="10" viewBox="0 0 11 10"><path d="M6.400 0.400L7.700 3.600 10.800 3.800 8.400 5.900 9.200 9.200 6.400 7.400 3.600 9.200 4.400 5.900 2 3.800 5.100 3.600z" fill="#5a5a5a"/><path d="M0 3.600h2.400M0.600 5.600h2" stroke="#8a8a8a" stroke-width=".7"/></svg>
<div class="a" style="left:24px;top:246px;width:241px;height:183px;background:#fff;"></div>
<div class="a" style="left:81.50px;top:252.39px;font-size:13.6px;line-height:1;color:#000;transform-origin:0 0;transform:scaleX(1.0030);font-weight:bold;">Логічні оператори</div>
<svg style="left:27px;top:268px" width="236" height="114"><rect x="-1" y="1.500" width="234.700" height="111" fill="none" stroke="#f9a05a" stroke-width="1"/></svg>
<div class="a" style="left:30px;top:275.3px;width:2.4px;height:2.4px;background:#222;"></div>
<div class="a mono" style="left:38px;top:272.40px;font-size:8.400px;line-height:10px;color:#1c1c1c;-webkit-text-stroke:0.45px #1c1c1c;transform-origin:0 0;transform:scaleX(1.232)"><b>and</b> (логічне <b>і</b>)<b>–</b> загальна умова</div>
<div class="a mono" style="left:38px;top:284.60px;font-size:8.400px;line-height:10px;color:#1c1c1c;-webkit-text-stroke:0.45px #1c1c1c;transform-origin:0 0;transform:scaleX(1.232)">виконується якщо всі умови</div>
<div class="a mono" style="left:38px;top:297.00px;font-size:8.400px;line-height:10px;color:#1c1c1c;-webkit-text-stroke:0.45px #1c1c1c;transform-origin:0 0;transform:scaleX(1.232)">виконуються;</div>
<div class="a" style="left:30px;top:314.1px;width:2.4px;height:2.4px;background:#222;"></div>
<div class="a mono" style="left:38px;top:311.20px;font-size:8.400px;line-height:10px;color:#1c1c1c;-webkit-text-stroke:0.45px #1c1c1c;transform-origin:0 0;transform:scaleX(1.232)"><b>or</b> (логічне <b>або</b>) <b>–</b> загальна умова</div>
<div class="a mono" style="left:38px;top:325.10px;font-size:8.400px;line-height:10px;color:#1c1c1c;-webkit-text-stroke:0.45px #1c1c1c;transform-origin:0 0;transform:scaleX(1.232)">виконується якщо хоча б одна з умов</div>
<div class="a mono" style="left:38px;top:337.40px;font-size:8.400px;line-height:10px;color:#1c1c1c;-webkit-text-stroke:0.45px #1c1c1c;transform-origin:0 0;transform:scaleX(1.232)">виконується;</div>
<div class="a" style="left:30px;top:355.1px;width:2.4px;height:2.4px;background:#222;"></div>
<div class="a mono" style="left:38px;top:352.20px;font-size:8.400px;line-height:10px;color:#1c1c1c;-webkit-text-stroke:0.45px #1c1c1c;transform-origin:0 0;transform:scaleX(1.232)"><b>not</b> (логічне <b>ні</b>) – зміна значення</div>
<div class="a mono" style="left:38px;top:364.20px;font-size:8.400px;line-height:10px;color:#1c1c1c;-webkit-text-stroke:0.45px #1c1c1c;transform-origin:0 0;transform:scaleX(1.232)">на протилежне.</div>
<div class="a" style="left:24px;top:246px;width:241px;height:183px;background:transparent;border:3px solid #d24726;"></div>
<div class="a" style="left:11.50px;top:444.18px;font-size:14.2px;line-height:1;color:#444;transform-origin:0 0;transform:scaleX(1.0646);">9</div>
<svg style="left:9px;top:461.5px" width="11" height="10" viewBox="0 0 11 10"><path d="M6.400 0.400L7.700 3.600 10.800 3.800 8.400 5.900 9.200 9.200 6.400 7.400 3.600 9.200 4.400 5.900 2 3.800 5.100 3.600z" fill="#5a5a5a"/><path d="M0 3.600h2.400M0.600 5.600h2" stroke="#8a8a8a" stroke-width=".7"/></svg>
<div class="a" style="left:26px;top:445px;width:237px;height:178.5px;background:#fff;border:1px solid #c9c9c9;"></div>
<div class="a" style="left:40.2px;top:454px;width:210px;height:25.5px;background:#fff;border:1px solid #f9a05a;"></div>
<div class="a" style="left:49.50px;top:460.21px;font-size:14.4px;line-height:1;color:#a9c9ec;transform-origin:0 0;transform:scaleX(0.9550);font-weight:bold;-webkit-text-stroke:0.7px #2f5b9c;">Каскадні умовні конструкції</div>
<div class="a" style="left:57.30px;top:484.83px;font-size:8px;line-height:1;color:#4a4a4a;transform-origin:0 0;transform:scaleX(1.0047);word-spacing:0.225px;">Для перевірки більше однієї умови використовують</div>
<div class="a" style="left:34.30px;top:493.93px;font-size:8px;line-height:1;color:#4a4a4a;transform-origin:0 0;transform:scaleX(1.0047);word-spacing:2.926px;">команду <b>elif</b> (скорочення від <b>else if</b>). Записується ця</div>
<div class="a" style="left:34.30px;top:503.73px;font-size:8px;line-height:1;color:#4a4a4a;transform-origin:0 0;transform:scaleX(1.0047);word-spacing:4.775px;">команда тільки після інструкцій <b>if</b> або після іншої</div>
<div class="a" style="left:34.30px;top:512.83px;font-size:8px;line-height:1;color:#4a4a4a;transform-origin:0 0;transform:scaleX(1.0047);word-spacing:-0.000px;">команди <b>elif</b>. Дана команда дозволяє вказувати додаткові</div>
<div class="a" style="left:34.30px;top:522.03px;font-size:8px;line-height:1;color:#4a4a4a;transform-origin:0 0;transform:scaleX(1.0047);word-spacing:4.130px;">умови для перевірки. Вкладені умовні конструкції в</div>
<div class="a" style="left:34.30px;top:532.03px;font-size:8px;line-height:1;color:#4a4a4a;transform-origin:0 0;transform:scaleX(1.0047);word-spacing:0.807px;">деяких випадках можна замінити каскадними. Для цього</div>
<div class="a" style="left:34.30px;top:540.73px;font-size:8px;line-height:1;color:#4a4a4a;transform-origin:0 0;transform:scaleX(1.0047);word-spacing:0.706px;">використовується інструкція <b>elif</b>, яка заміняє собою пару</div>
<div class="a" style="left:34.30px;top:549.83px;font-size:8px;line-height:1;color:#4a4a4a;transform-origin:0 0;transform:scaleX(0.9439);"><b>else</b> та <b>if</b>.</div>
<div class="a" style="left:57.30px;top:561.53px;font-size:8px;line-height:1;color:#4a4a4a;transform-origin:0 0;transform:scaleX(1.0047);word-spacing:1.064px;">У такій конструкції умови <b>if, …, elif</b> перевіряються</div>
<div class="a" style="left:34.30px;top:570.93px;font-size:8px;line-height:1;color:#4a4a4a;transform-origin:0 0;transform:scaleX(1.0047);word-spacing:3.775px;">по черзі, виконується блок, що відповідає першій з</div>
<div class="a" style="left:34.30px;top:580.03px;font-size:8px;line-height:1;color:#4a4a4a;transform-origin:0 0;transform:scaleX(1.0047);word-spacing:0.312px;">істинних умов. Якщо всі умови помилкові, то виконується</div>
<div class="a" style="left:34.30px;top:589.83px;font-size:8px;line-height:1;color:#4a4a4a;transform-origin:0 0;transform:scaleX(0.9959);">блок <b>else</b>, якщо він присутній.</div>
<div class="a" style="left:4.10px;top:641.18px;font-size:14.2px;line-height:1;color:#444;transform-origin:0 0;transform:scaleX(1.0012);">10</div>
<div class="a" style="left:26px;top:642.5px;width:237px;height:178px;background:#fff;border:1px solid #c9c9c9;"></div>
<div class="a" style="left:51.90px;top:653.36px;font-size:13.4px;line-height:1;color:#000;transform-origin:0 0;transform:scaleX(1.0204);font-weight:bold;">Каскадні умовні конструкції</div>
<div class="a" style="left:53.20px;top:672.22px;font-size:8.6px;line-height:1;color:#4a4a4a;transform-origin:0 0;transform:scaleX(0.9972);word-spacing:0.000px;">Програма, яка за даними ненульовим числах x і y</div>
<div class="a" style="left:30.10px;top:682.22px;font-size:8.6px;line-height:1;color:#4a4a4a;transform-origin:0 0;transform:scaleX(0.9972);word-spacing:4.116px;">визначає, в якій з чвертей координатної площини</div>
<div class="a" style="left:30.10px;top:692.22px;font-size:8.6px;line-height:1;color:#4a4a4a;transform-origin:0 0;transform:scaleX(0.9523);">знаходиться точка (x, y) можна переписати у вигляді:</div>
<div class="a" style="left:35.4px;top:703.3px;width:91.3px;height:104.6px;background:#fff;border:1px solid #9bbb59;"></div>
<div class="a" style="left:36.50px;top:706.20px;font-size:5.2px;line-height:1;color:#222;transform-origin:0 0;transform:scaleX(1.1167);font-weight:bold;">x = int (input ())</div>
<div class="a" style="left:36.50px;top:714.10px;font-size:5.2px;line-height:1;color:#222;transform-origin:0 0;transform:scaleX(1.1167);font-weight:bold;">y = int (input ())</div>
<div class="a" style="left:36.50px;top:721.00px;font-size:5.2px;line-height:1;color:#f52020;transform-origin:0 0;transform:scaleX(1.0847);font-weight:bold;">if x&gt; 0:</div>
<div class="a" style="left:42.50px;top:729.40px;font-size:5.2px;line-height:1;color:#f52020;transform-origin:0 0;transform:scaleX(1.0847);font-weight:bold;">if y&gt; 0:</div>
<div class="a" style="left:48.00px;top:737.30px;font-size:5.2px;line-height:1;color:#222;transform-origin:0 0;transform:scaleX(1.1057);font-weight:bold;">print &quot;Перша чверть&quot;</div>
<div class="a" style="left:42.50px;top:744.40px;font-size:5.2px;line-height:1;color:#222;transform-origin:0 0;transform:scaleX(1.1160);font-weight:bold;">else:</div>
<div class="a" style="left:52.30px;top:752.10px;font-size:5.2px;line-height:1;color:#222;transform-origin:0 0;transform:scaleX(1.0903);font-weight:bold;">print &quot;Четверта чверть&quot;</div>
<div class="a" style="left:36.50px;top:759.90px;font-size:5.2px;line-height:1;color:#222;transform-origin:0 0;transform:scaleX(1.0991);font-weight:bold;">else:</div>
<div class="a" style="left:42.50px;top:766.90px;font-size:5.2px;line-height:1;color:#f52020;transform-origin:0 0;transform:scaleX(1.0847);font-weight:bold;">if y&gt; 0:</div>
<div class="a" style="left:52.30px;top:775.10px;font-size:5.2px;line-height:1;color:#222;transform-origin:0 0;transform:scaleX(1.1078);font-weight:bold;">print &quot;Друга чверть&quot;</div>
<div class="a" style="left:42.50px;top:783.00px;font-size:5.2px;line-height:1;color:#222;transform-origin:0 0;transform:scaleX(1.1160);font-weight:bold;">else:</div>
<div class="a" style="left:52.30px;top:790.10px;font-size:5.2px;line-height:1;color:#222;transform-origin:0 0;transform:scaleX(1.0870);font-weight:bold;">print &quot;Третя чверть&quot;</div>
<div class="a" style="left:152.2px;top:713px;width:104.7px;height:98px;background:#fff;border:1px solid #9bbb59;"></div>
<div class="a" style="left:153.80px;top:716.27px;font-size:7px;line-height:1;color:#222;transform-origin:0 0;transform:scaleX(0.9878);font-weight:bold;">x = int (input())</div>
<div class="a" style="left:153.80px;top:725.37px;font-size:7px;line-height:1;color:#222;transform-origin:0 0;transform:scaleX(0.9878);font-weight:bold;">y = int (input())</div>
<div class="a" style="left:153.80px;top:735.17px;font-size:7px;line-height:1;color:#f52020;transform-origin:0 0;transform:scaleX(0.9999);-webkit-text-stroke:0.3px #f52020;">if x &gt; 0 and y &gt; 0:</div>
<div class="a" style="left:161.00px;top:744.67px;font-size:7px;line-height:1;color:#222;transform-origin:0 0;transform:scaleX(0.9714);font-weight:bold;">print &quot;Перша чверть&quot;</div>
<div class="a" style="left:153.80px;top:753.37px;font-size:7px;line-height:1;color:#f52020;transform-origin:0 0;transform:scaleX(1.0092);-webkit-text-stroke:0.3px #f52020;">elif x &gt; 0 and y &lt; 0:</div>
<div class="a" style="left:161.00px;top:762.47px;font-size:7px;line-height:1;color:#222;transform-origin:0 0;transform:scaleX(0.9570);font-weight:bold;">print &quot;Четверта чверть&quot;</div>
<div class="a" style="left:153.80px;top:771.27px;font-size:7px;line-height:1;color:#f52020;transform-origin:0 0;transform:scaleX(1.0525);-webkit-text-stroke:0.3px #f52020;">elif y &gt; 0:</div>
<div class="a" style="left:161.00px;top:781.47px;font-size:7px;line-height:1;color:#222;transform-origin:0 0;transform:scaleX(0.9655);font-weight:bold;">print &quot; Друга чверть&quot;</div>
<div class="a" style="left:153.80px;top:790.37px;font-size:7px;line-height:1;color:#222;transform-origin:0 0;transform:scaleX(0.9769);font-weight:bold;">else:</div>
<div class="a" style="left:161.00px;top:799.47px;font-size:7px;line-height:1;color:#222;transform-origin:0 0;transform:scaleX(0.9509);font-weight:bold;">print&quot;Третя чверть&quot;</div>
<svg style="left:108px;top:730px" width="50" height="32" viewBox="108 730 50 32"><path d="M112.400 735.400L143.100 740.600 144.100 734.800 152.800 747.400 140.400 756.500 141.900 751.300 110.700 745.700z" fill="#fb0505" stroke="#3c5d8c" stroke-width=".7"/><text x="114.600" y="743.200" transform="rotate(10.500 114.600 743.200)" font-family="Liberation Sans" font-size="4.700" font-style="italic" font-weight="bold" fill="#ffe9c8" textLength="28.500" lengthAdjust="spacingAndGlyphs">Інший запис</text></svg>
<div class="a" style="left:4.70px;top:838.08px;font-size:14.2px;line-height:1;color:#444;transform-origin:0 0;transform:scaleX(0.9705);">11</div>
<div class="a" style="left:26px;top:839px;width:237px;height:190px;background:#fff;border:1px solid #c9c9c9;"></div>
<div class="a" style="left:84.30px;top:853.84px;font-size:12px;line-height:1;color:#000;transform-origin:0 0;transform:scaleX(0.9442);font-weight:bold;">Розв’язування задач</div>
<div class="a" style="left:41.20px;top:876.24px;font-size:7.4px;line-height:1;color:#222;transform-origin:0 0;transform:scaleX(1.0608);font-weight:bold;">Приклад 1.</div>
<div class="a" style="left:63.90px;top:887.57px;font-size:7.6px;line-height:1;color:#4a4a4a;transform-origin:0 0;transform:scaleX(1.0527);">Дано одне натуральне число. Якщо воно парне,</div>
<div class="a" style="left:41.20px;top:894.97px;font-size:7.6px;line-height:1;color:#4a4a4a;transform-origin:0 0;transform:scaleX(1.0125);">то вивести слово «YES», а якщо непарне, то – «NO»</div>
<div class="a" style="left:41.20px;top:904.94px;font-size:7.4px;line-height:1;color:#4a4a4a;transform-origin:0 0;transform:scaleX(1.1198);font-style:italic;">Вхід</div>
<div class="a" style="left:126.00px;top:904.94px;font-size:7.4px;line-height:1;color:#4a4a4a;transform-origin:0 0;transform:scaleX(1.1100);font-style:italic;">Вихід</div>
<div class="a" style="left:41.20px;top:916.04px;font-size:7.4px;line-height:1;color:#4a4a4a;transform-origin:0 0;transform:scaleX(1.1294);font-style:italic;">34</div>
<div class="a" style="left:126.40px;top:916.04px;font-size:7.4px;line-height:1;color:#4a4a4a;transform-origin:0 0;transform:scaleX(0.8786);font-style:italic;">YES</div>
<div class="a" style="left:64.30px;top:927.14px;font-size:7.4px;line-height:1;color:#222;transform-origin:0 0;transform:scaleX(1.0737);font-weight:bold;">Програма:</div>
<div class="a" style="left:41.20px;top:936.15px;font-size:8.8px;line-height:1;color:#4a4a4a;transform-origin:0 0;transform:scaleX(0.9536);">n=int(input())</div>
<div class="a" style="left:41.20px;top:946.95px;font-size:8.8px;line-height:1;color:#4a4a4a;transform-origin:0 0;transform:scaleX(0.9105);">if n%2==0:</div>
<div class="a" style="left:49.10px;top:957.05px;font-size:8.8px;line-height:1;color:#4a4a4a;transform-origin:0 0;transform:scaleX(0.9195);">print(“YES”)</div>
<div class="a" style="left:41.20px;top:967.05px;font-size:8.8px;line-height:1;color:#4a4a4a;transform-origin:0 0;transform:scaleX(0.9197);">else:</div>
<div class="a" style="left:49.10px;top:977.85px;font-size:8.8px;line-height:1;color:#4a4a4a;transform-origin:0 0;transform:scaleX(0.9897);">print(“NO”)</div>
<svg style="left:227px;top:982px" width="34" height="33" viewBox="0 0 34 33"><defs><linearGradient id="pyb" x1="0" y1="0" x2="0" y2="1"><stop offset="0" stop-color="#1a82b4"/><stop offset="1" stop-color="#0c5a8a"/></linearGradient><linearGradient id="pyy" x1="0" y1="0" x2="0" y2="1"><stop offset="0" stop-color="#d9a32e"/><stop offset="1" stop-color="#cfbd55"/></linearGradient></defs><path d="M16.600 0.600c-5 0-7.600 1.600-7.600 4.600v3.800h8v1.400H5.600c-3.400 0-5.200 2.800-5.200 7s1.800 6.600 5.200 6.600h3V19.600c0-3 2.400-5 5.400-5h7c2.600 0 4.400-1.800 4.400-4.400V5.200c0-3-3-4.600-8.800-4.600z" fill="url(#pyb)"/><circle cx="12.600" cy="4.600" r="1.500" fill="#fff"/><path d="M17.400 32.400c5 0 7.600-1.600 7.600-4.600V24h-8v-1.400h11.400c3.400 0 5.200-2.800 5.200-7S31.800 9 28.400 9h-3v4.400c0 3-2.400 5-5.400 5h-7c-2.600 0-4.400 1.800-4.400 4.400v5c0 3 3 4.600 8.800 4.600z" fill="url(#pyy)"/><circle cx="21.400" cy="28.400" r="1.500" fill="#fff"/></svg>
<div class="a" style="left:583px;top:172px;width:1042px;height:782px;background:#fff;border:1px solid #c8c8c8"></div>
<div class="a" style="left:826px;top:176px;font-weight:bold;font-size:61px;line-height:70px;color:#000;transform-origin:0 0;transform:scaleX(0.999)">Логічні оператори</div>
<svg style="left:570px;top:250px" width="1060" height="512"><rect x="10.45" y="9.55" width="1040" height="492.2" fill="#fff" stroke="#f79646" stroke-width="2.6"/></svg>
<div class="a mono stx" style="left:0;top:0;font-size:37.5px;color:#000;line-height:56px;-webkit-text-stroke:0.6px #fff">
<div class="a" style="left:592px;top:283.8px;width:12px;height:11.2px;border-radius:50%;background:#000"></div>
<div class="a" style="left:629.5px;top:266.92px;transform-origin:0 0;transform:scaleX(1.2347)"><b>and</b> (логічне <b>і</b>)<b>–</b> загальна умова</div>
<div class="a" style="left:629.5px;top:322.72px;transform-origin:0 0;transform:scaleX(1.2347)">виконується якщо всі умови</div>
<div class="a" style="left:629.5px;top:378.52px;transform-origin:0 0;transform:scaleX(1.2347)">виконуються;</div>
<div class="a" style="left:592px;top:460.9px;width:12px;height:11.2px;border-radius:50%;background:#000"></div>
<div class="a" style="left:629.5px;top:444.07px;transform-origin:0 0;transform:scaleX(1.2347)"><b>or</b> (логічне <b>або</b>) <b>–</b> загальна умова</div>
<div class="a" style="left:629.5px;top:499.87px;transform-origin:0 0;transform:scaleX(1.2347)">виконується якщо хоча б одна з умов</div>
<div class="a" style="left:629.5px;top:555.67px;transform-origin:0 0;transform:scaleX(1.2347)">виконується;</div>
<div class="a" style="left:592px;top:638.1px;width:12px;height:11.2px;border-radius:50%;background:#000"></div>
<div class="a" style="left:629.5px;top:621.22px;transform-origin:0 0;transform:scaleX(1.2347)"><b>not</b> (логічне <b>ні</b>) – зміна значення</div>
<div class="a" style="left:629.5px;top:677.02px;transform-origin:0 0;transform:scaleX(1.2347)">на протилежне.</div>
</div>
<div class="a" style="left:283px;top:152px;width:15px;height:865px;background:#dcdcdc;"></div>
<div class="a" style="left:283px;top:154px;width:15px;height:15px;background:#fff;border:1px solid #b6b6b6;"></div>
<svg style="left:287px;top:159px" width="8" height="5"><path d="M0 4.4h7L3.5 0.6z" fill="#6a6a6a"/></svg>
<div class="a" style="left:283px;top:587px;width:15px;height:278px;background:#fff;border:1px solid #b6b6b6;"></div>
<div class="a" style="left:283px;top:1001px;width:15px;height:14px;background:#fff;border:1px solid #b6b6b6;"></div>
<svg style="left:287px;top:1006px" width="8" height="5"><path d="M0 0.4h7L3.5 4.2z" fill="#6a6a6a"/></svg>
<div class="a" style="left:302px;top:152px;width:1px;height:866px;background:#c6c6c6;"></div>
<div class="a" style="left:304px;top:969px;width:1616px;height:1px;background:#c6c6c6;"></div>
<div class="a" style="left:314.50px;top:978.81px;font-size:14.4px;line-height:1;color:#444;transform-origin:0 0;transform:scaleX(0.9955);">Нотатки до слайда</div>
<div class="a" style="left:1904px;top:152px;width:15px;height:762px;background:#dcdcdc;"></div>
<div class="a" style="left:1904px;top:154px;width:15px;height:15px;background:#fff;border:1px solid #b6b6b6;"></div>
<svg style="left:1908px;top:159px" width="8" height="5"><path d="M0 4.4h7L3.5 0.6z" fill="#6a6a6a"/></svg>
<div class="a" style="left:1904px;top:586px;width:15px;height:51px;background:#fff;border:1px solid #b6b6b6;"></div>
<div class="a" style="left:1904px;top:898px;width:15px;height:15px;background:#fff;border:1px solid #b6b6b6;"></div>
<svg style="left:1908px;top:903.5px" width="8" height="5"><path d="M0 0.4h7L3.5 4.2z" fill="#6a6a6a"/></svg>
<svg style="left:1907.5px;top:917px" width="9" height="9" viewBox="0 0 9 9"><path d="M0.6 4.2h7.8L4.5 0.4zM0.6 8.6h7.8L4.5 4.8z" fill="#6a6a6a"/></svg>
<svg style="left:1907.5px;top:934px" width="9" height="9" viewBox="0 0 9 9"><path d="M0.6 0.4h7.8L4.5 4.2zM0.6 4.8h7.8L4.5 8.6z" fill="#6a6a6a"/></svg>
<div class="a" style="left:0;top:1018px;width:1920px;height:22px;background:#f1f1f1;border-top:1px solid #cfcfcf"></div>
<div class="a" style="left:8.25px;top:1022.81px;font-size:11.8px;line-height:1;color:#444;transform-origin:0 0;transform:scaleX(0.9023);">Слайд 8 з 13</div>
<svg style="left:91px;top:1021px" width="15" height="14" viewBox="0 0 15 14"><path d="M6 2.2C4.4 0.8 2.4 0.8 0.6 1.4V11c1.8-.6 3.8-.6 5.4.8M6 2.2V12M6 2.2C7 1.2 8 1 9 1" fill="none" stroke="#5a5a5a" stroke-width="1"/><path d="M8.6 4.2l4.8 5M13.4 4.2l-4.8 5" stroke="#5a5a5a" stroke-width="1.1"/><path d="M6 12c1.4-1 2.6-1.2 4-1.2" fill="none" stroke="#5a5a5a"/></svg>
<div class="a" style="left:121.50px;top:1022.81px;font-size:11.8px;line-height:1;color:#444;transform-origin:0 0;transform:scaleX(0.9871);">українська</div>
<svg style="left:1397px;top:1022px" width="13" height="13" viewBox="0 0 13 13"><path d="M6.5 0.4L9.4 3.6H3.6z" fill="#6a6a6a"/><path d="M0.4 6h12.2M0.4 8.8h12.2M0.4 11.6h8.4" stroke="#6a6a6a" stroke-width="1.1"/></svg>
<div class="a" style="left:1414.10px;top:1023.81px;font-size:11.8px;line-height:1;color:#444;transform-origin:0 0;transform:scaleX(1.0032);">Нотатки</div>
<svg style="left:1479px;top:1022px" width="13" height="13" viewBox="0 0 13 13"><path d="M0.6 0.8h11.6v8H6.6L3.8 12V8.8H0.6z" fill="#6a6a6a"/></svg>
<div class="a" style="left:1494.80px;top:1023.81px;font-size:11.8px;line-height:1;color:#444;transform-origin:0 0;transform:scaleX(1.0441);">Примітки</div>
<div class="a" style="left:1565px;top:1019px;width:38px;height:21px;background:#c8c8c8"></div>
<svg style="left:1576.5px;top:1021.5px" width="15" height="14" viewBox="0 0 15 14"><rect x="0.6" y="0.6" width="13.8" height="12.4" fill="none" stroke="#5f5f5f" stroke-width="1.1"/><path d="M4 0.6V13" stroke="#5f5f5f" stroke-width="1.1"/><rect x="6.2" y="2.8" width="6" height="4.4" fill="none" stroke="#5f5f5f" stroke-width="1"/><path d="M4 9.6h10.4" stroke="#5f5f5f" stroke-width="1"/></svg>
<svg style="left:1614.5px;top:1021.5px" width="15" height="14" viewBox="0 0 15 14" fill="none" stroke="#5f5f5f" stroke-width="1.1"><rect x="0.6" y="0.8" width="5.4" height="4.2"/><rect x="8.6" y="0.8" width="5.4" height="4.2"/><rect x="0.6" y="8.4" width="5.4" height="4.2"/><rect x="8.6" y="8.4" width="5.4" height="4.2"/></svg>
<svg style="left:1652.5px;top:1021.5px" width="14" height="14" viewBox="0 0 14 14" fill="none" stroke="#5f5f5f" stroke-width="1"><path d="M7 2C5.4 0.8 3 0.6 0.6 1V11.6c2.4-.4 4.8-.2 6.4 1 1.6-1.2 4-1.4 6.4-1V1C11 .6 8.600.8 7 2zM7 2V12.6"/><path d="M2 3.400h3.400M2 5.400h3.400M2 7.400h3.400M2 9.400h3.400M8.600 3.400H12M8.600 5.400H12M8.600 7.400H12M8.600 9.400H12" stroke-width=".8"/></svg>
<svg style="left:1690.5px;top:1021.5px" width="14" height="14" viewBox="0 0 14 14" fill="none" stroke="#5f5f5f" stroke-width="1.1"><path d="M0.400 1H13.600M1.600 1V7.400H12.400V1M7 7.400V12M4 13h6"/><rect x="4.200" y="2.800" width="5.600" height="2.600" stroke-width=".9"/></svg>
<div class="a" style="left:1722px;top:1028px;width:6px;height:2px;background:#5f5f5f"></div>
<div class="a" style="left:1732px;top:1028px;width:100px;height:1px;background:#9a9a9a"></div>
<div class="a" style="left:1782px;top:1023px;width:4px;height:11px;background:#5f5f5f"></div>
<div class="a" style="left:1836px;top:1028px;width:8px;height:2px;background:#5f5f5f"></div><div class="a" style="left:1839px;top:1025px;width:2px;height:8px;background:#5f5f5f"></div>
<div class="a" style="left:1859.80px;top:1023.95px;font-size:11.4px;line-height:1;color:#444;transform-origin:0 0;transform:scaleX(0.9403);">109%</div>
<svg style="left:1899.5px;top:1021.5px" width="14" height="14" viewBox="0 0 14 14" fill="none" stroke="#5f5f5f" stroke-width="1"><rect x="0.600" y="0.600" width="12.800" height="12.800"/><path d="M7 2.200V5M5.800 3.400L7 2.200l1.200 1.200M7 11.800V9M5.800 10.600L7 11.800l1.200-1.200M2.200 7H5M3.400 5.800L2.200 7l1.200 1.200M11.800 7H9M10.600 5.800L11.800 7l-1.200 1.200"/></svg>
<svg style="left:15.5px;top:1052px" width="17" height="16" viewBox="0 0 17 16"><path d="M0.200 2.400L7.200 1.400V7.600H0.200zM8.200 1.250L16.700 0V7.600H8.200zM0.200 8.500H7.200V14.600L0.200 13.600zM8.200 8.500H16.700V16L8.200 14.750z" fill="#fff"/></svg>
<svg style="left:63px;top:1051px" width="18" height="18" viewBox="0 0 18 18"><circle cx="11.400" cy="7" r="5.300" fill="none" stroke="#fff" stroke-width="1.400"/><path d="M7.600 10.800L1.200 17" stroke="#fff" stroke-width="1.500"/></svg>
<svg style="left:111.500px;top:1051.500px" width="17" height="16" viewBox="0 0 17 16"><rect x="0.900" y="4.200" width="9.800" height="7.800" fill="none" stroke="#fff" stroke-width="1.400"/><path d="M0.900 2.600V0.700H10.700V2.600M0.900 13.600V15.300H10.700V13.600" fill="none" stroke="#fff" stroke-width="1.300"/><path d="M14.600 0.400V3.600M14.600 8.600V15.600" stroke="#fff" stroke-width="1.500"/><rect x="13.400" y="4.600" width="2.600" height="2.800" fill="#fff"/></svg>
<svg style="left:160px;top:1050px" width="22" height="19" viewBox="0 0 22 19"><path d="M0.400 1.600Q0.400 0.800 1.200 0.800H8.400L10 2.400H20.800Q21.600 2.400 21.600 3.200V17.600H0.400z" fill="#f5d77a"/><path d="M0.400 4H21.600V17.600H0.400z" fill="#fbe49a"/><rect x="1.600" y="1.600" width="5.600" height="1" fill="#7fc4e8"/><path d="M4.400 18.400V11.600Q4.400 10.800 5.200 10.800H16.800Q17.600 10.800 17.600 11.600V18.400H14.200V14H7.800V18.400z" fill="#35b0e8"/></svg>
<svg style="left:208px;top:1048px" width="24" height="24" viewBox="0 0 24 24"><g transform="translate(12 12)"><g fill="#8fb0e6"><circle r="7.800"/><rect x="-3" y="-11.600" width="6" height="6" rx="1.600" transform="rotate(0)"/><rect x="-3" y="-11.600" width="6" height="6" rx="1.600" transform="rotate(60)"/><rect x="-3" y="-11.600" width="6" height="6" rx="1.600" transform="rotate(120)"/><rect x="-3" y="-11.600" width="6" height="6" rx="1.600" transform="rotate(180)"/><rect x="-3" y="-11.600" width="6" height="6" rx="1.600" transform="rotate(240)"/><rect x="-3" y="-11.600" width="6" height="6" rx="1.600" transform="rotate(300)"/></g><circle r="5.600" fill="#b9cff2"/><path d="M-4.600 -2.600h3.200l-1 2zM4.600 -2.600h-3.200l1 2z" fill="#111"/><path d="M-2 2.600h4L0 5.400z" fill="#1a1a40"/><path d="M0 -7v4" stroke="#dfe9fb" stroke-width="1.200"/></g></svg>
<svg style="left:257px;top:1048px" width="24" height="24" viewBox="0 0 24 24"><rect x="0.400" y="0.400" width="23.200" height="23.200" rx="3.600" fill="#9fe3a0"/><text x="7.400" y="20" font-family="Liberation Serif" font-style="italic" font-weight="bold" font-size="24" fill="#1638a8">i</text></svg>
<svg style="left:306px;top:1048px" width="24" height="24" viewBox="0 0 24 24"><g transform="translate(12 12)"><circle r="11.200" fill="#db4437"/><path d="M0 0L-9.700 -5.600A11.200 11.200 0 0 0 5.600 9.700z" fill="#0f9d58"/><path d="M0 0L5.600 9.700A11.200 11.200 0 0 0 11.200 0L10.500 -4H0z" fill="#ffcd40"/><path d="M0 -5h10.600A11.200 11.200 0 0 0 -9.700 -5.600L-4.400 2.600z" fill="#db4437"/><path d="M-9.700 -5.600A11.200 11.200 0 0 0 4 10.400L5 4.200 0 5.200-4.800 2z" fill="#0f9d58"/><circle r="5.200" fill="#f1f1f1"/><circle r="4.100" fill="#4285f4"/></g></svg>
<div class="a" style="left:343px;top:1040px;width:48px;height:38px;background:#3a3a3a"></div>
<svg style="left:355px;top:1048px" width="24" height="24" viewBox="0 0 24 24"><rect x="11" y="3.600" width="12" height="16" fill="#fff"/><rect x="11" y="3.600" width="12" height="16" fill="none" stroke="#d04a28" stroke-width="1"/><circle cx="17.600" cy="8.600" r="3.200" fill="#d04a28"/><path d="M17.600 8.600V5.200A3.400 3.400 0 0 1 21 8.600z" fill="#fff"/><path d="M13.600 14.400h8M13.600 16.800h8" stroke="#d04a28" stroke-width="1.100"/><path d="M0.600 3L13.400 0.600V22.800L0.600 20.400z" fill="#d04a28"/><path d="M4.400 7.200h3.400q3 0 3 2.600t-3 2.600H6.200V16H4.400zM6.200 8.700v2.300h1.400q1.400 0 1.400-1.150T7.600 8.700z" fill="#fff"/></svg>
<svg style="left:404.500px;top:1048px" width="24" height="24" viewBox="0 0 24 24"><rect x="11" y="3.600" width="11.600" height="16" fill="#fff"/><rect x="11" y="3.600" width="11.600" height="16" fill="none" stroke="#2b579a" stroke-width="1"/><path d="M14 6.400h7M14 8.600h7M14 10.800h7M14 13h7M14 15.200h7M14 17.400h7" stroke="#2b579a" stroke-width="1"/><path d="M0.400 3L13.200 0.600V22.800L0.400 20.400z" fill="#2b579a"/><path d="M2.600 7.600h1.600l1 5.600 1.200-5.600h1.400l1.200 5.600 1-5.600h1.500L9.700 15.600H8.200L7.100 10.400 6 15.600H4.400z" fill="#fff"/></svg>
<div class="a" style="left:151px;top:1078px;width:40px;height:2px;background:#f4c9b0"></div>
<div class="a" style="left:298px;top:1078px;width:40px;height:2px;background:#f4c9b0"></div>
<div class="a" style="left:343px;top:1078px;width:48px;height:2px;background:#f4c9b0"></div>
<div class="a" style="left:396px;top:1078px;width:40px;height:2px;background:#f4c9b0"></div>
<svg style="left:1662px;top:1052px" width="15" height="16" viewBox="0 0 15 16" fill="none" stroke="#fff" stroke-width="1.100"><circle cx="10.200" cy="3.400" r="2.700"/><path d="M6.200 10.800c0-2.400 1.800-4 4-4s4 1.600 4 4"/><circle cx="4" cy="8" r="2.100"/><path d="M0.600 15c0-2.600 1.400-4.400 3.400-4.400s3.400 1.800 3.400 4.400"/></svg>
<svg style="left:1698.500px;top:1055px" width="13" height="8" viewBox="0 0 13 8"><path d="M0.600 7L6.500 1.100 12.400 7" fill="none" stroke="#fff" stroke-width="1.200"/></svg>
<svg style="left:1721px;top:1052px" width="17" height="16" viewBox="0 0 17 16" fill="none" stroke="#fff" stroke-width="1.100"><rect x="4.600" y="1.600" width="11.600" height="8.400"/><path d="M10.400 10v2.600M7.400 13h6"/><rect x="0.600" y="0.600" width="3.400" height="4.600" fill="#0c0c0c"/><path d="M2.300 5.200V13.400H6"/></svg>
<svg style="left:1745px;top:1052px" width="17" height="16" viewBox="0 0 17 16" fill="none" stroke="#fff" stroke-width="1.100"><path d="M0.600 5.600h2.800L7 2.200v11.600L3.400 10.400H0.600z"/><path d="M9.400 5.600q1.400 2.400 0 4.800M11.600 3.800q2.600 4.200 0 8.400M13.800 2q3.800 6 0 12"/></svg>
<div class="a" style="left:1772.00px;top:1055.15px;font-size:11.4px;line-height:1;color:#fff;transform-origin:0 0;transform:scaleX(0.9782);">УКР</div>
<div class="a" style="left:1820.50px;top:1045.55px;font-size:11.4px;line-height:1;color:#fff;transform-origin:0 0;transform:scaleX(0.9293);">12:29</div>
<div class="a" style="left:1807.00px;top:1064.55px;font-size:11.4px;line-height:1;color:#fff;transform-origin:0 0;transform:scaleX(0.9559);">19.10.2020</div>
<svg style="left:1879px;top:1051.500px" width="17" height="17" viewBox="0 0 17 17"><path d="M0.600 0.600h15.800v11.600H7.600L4.200 15.800V12.200H0.600z" fill="none" stroke="#fff" stroke-width="1.100"/></svg>
<div class="a" style="left:1915px;top:1040px;width:1px;height:40px;background:#5a5a5a"></div>
</div></body></html>
